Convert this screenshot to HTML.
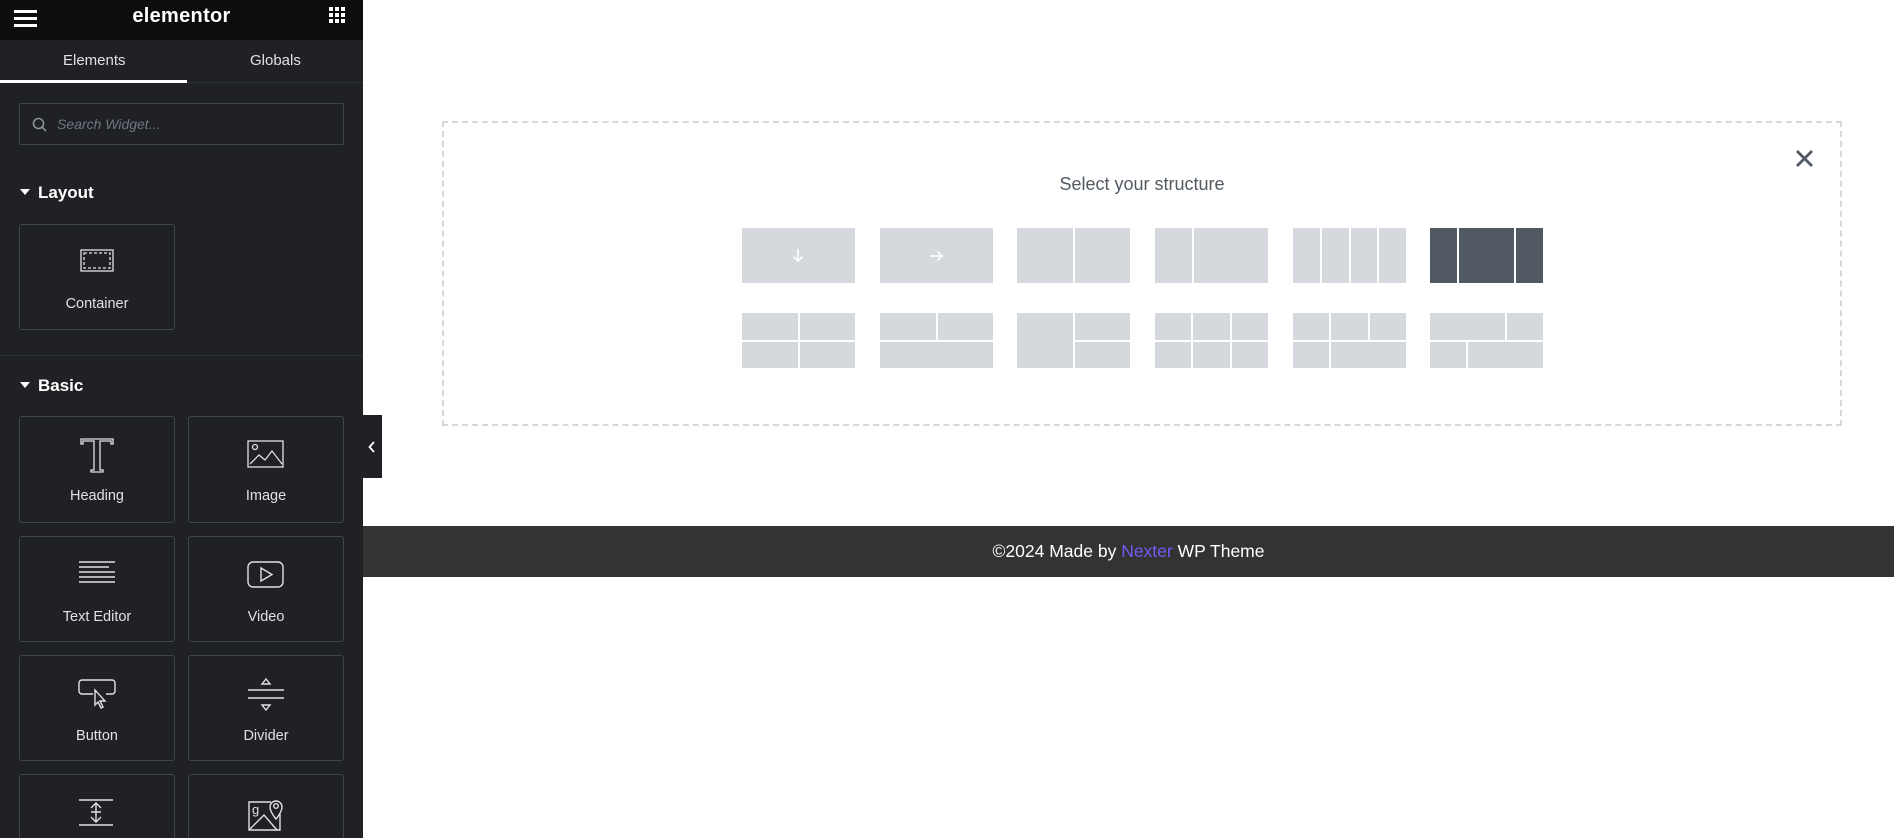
<!DOCTYPE html>
<html><head><meta charset="utf-8"><style>
*{margin:0;padding:0;box-sizing:border-box}
body{width:1894px;height:838px;overflow:hidden;background:#fff;font-family:"Liberation Sans",Arial,sans-serif;position:relative}
#sb{position:absolute;left:0;top:0;width:363px;height:838px;background:#1f2124;color:#e0e1e3;overflow:hidden}
#hd{height:40px;background:#0c0d0e;position:relative}
#hd .logo{position:absolute;left:0;right:0;top:5px;text-align:center;font-weight:bold;font-size:20px;color:#fff;letter-spacing:0.3px}
.tabs{height:43px;position:relative;border-bottom:1px solid #2d3035}
.tab{position:absolute;top:12px;font-size:15px;color:#e0e1e3}
.ul{position:absolute;left:0;top:40px;width:187px;height:3px;background:#fff}
.search{position:absolute;left:19px;top:103px;width:325px;height:42px;border:1px solid #3f444b;border-radius:2px}
.search span{position:absolute;left:37px;top:12px;font-size:14px;font-style:italic;color:#6d7882}
.sec{position:absolute;left:20px;font-weight:bold;font-size:17px;color:#fff}
.sec i{display:inline-block;width:0;height:0;border-left:5px solid transparent;border-right:5px solid transparent;border-top:6px solid #fff;margin-right:8px;vertical-align:3px}
.card{position:absolute;width:156px;border:1px solid #3f444b;border-radius:3px;text-align:center;font-size:14.5px;color:#e0e1e3}
.card svg{position:absolute;left:50%;transform:translateX(-50%)}
.card span{position:absolute;left:0;right:0}
.box{position:absolute;left:442px;top:121px;width:1400px;height:305px;border:2px dashed #d5d8dc}
.title{position:absolute;left:442px;width:1400px;top:174px;text-align:center;font-size:18px;color:#515962}
.c{position:absolute;width:113px;height:55px;display:flex;gap:2px}
.c>div{background:#d5d8dc;flex:1}
.g{position:absolute;width:113px;height:55px;display:grid;gap:2px}
.g>div{background:#d5d8dc}
#foot{position:absolute;left:363px;right:0;top:526px;height:51px;background:#333;color:#fff;text-align:center;font-size:17.5px;line-height:51px}
</style></head><body>
<div id="sb">
 <div id="hd">
  <svg style="position:absolute;left:14px;top:10px" width="23" height="18"><rect y="0" width="23" height="3" fill="#fff"/><rect y="7" width="23" height="3" fill="#fff"/><rect y="14" width="23" height="3" fill="#fff"/></svg>
  <div class="logo">elementor</div>
  <svg style="position:absolute;left:329px;top:7px" width="18" height="17" fill="#fff"><rect x="0" y="0" width="4" height="4"/><rect x="6" y="0" width="4" height="4"/><rect x="12" y="0" width="4" height="4"/><rect x="0" y="6" width="4" height="4"/><rect x="6" y="6" width="4" height="4"/><rect x="12" y="6" width="4" height="4"/><rect x="0" y="12" width="4" height="4"/><rect x="6" y="12" width="4" height="4"/><rect x="12" y="12" width="4" height="4"/></svg>
 </div>
 <div class="tabs"><div class="tab" style="left:63px">Elements</div><div class="tab" style="left:250px">Globals</div><div class="ul"></div></div>
 <div class="search"><svg style="position:absolute;left:12px;top:13px" width="15" height="15" fill="none" stroke="#8a9199" stroke-width="1.6"><circle cx="6.5" cy="6.5" r="5"/><path d="M10 10l4 4"/></svg><span>Search Widget...</span></div>
 <div class="sec" style="top:183px"><i></i>Layout</div>
 <div class="card" style="left:19px;top:224px;height:106px"><svg style="top:24px" width="34" height="24" fill="none" stroke="#e0e1e3" stroke-width="1.3"><rect x="1" y="1" width="32" height="21"/><rect x="4" y="4" width="26" height="15" stroke-dasharray="3 2"/></svg><span style="top:71px">Container</span></div>
 <div style="position:absolute;left:0;top:355px;width:363px;height:1px;background:#2d3035"></div>
 <div class="sec" style="top:376px"><i></i>Basic</div>

 <div class="card" style="left:19px;top:416px;height:107px"><svg style="top:20px" width="36" height="36" fill="none" stroke="#e0e1e3" stroke-width="1.3"><path d="M2 2h32v5h-2v-3h-11v29h3v2h-12v-2h3v-29h-11v3h-2z"/></svg><span style="top:71px">Heading</span></div>
 <div class="card" style="left:188px;top:416px;height:107px"><svg style="top:23px" width="38" height="28" fill="none" stroke="#e0e1e3" stroke-width="1.3"><rect x="1" y="1" width="35" height="26"/><circle cx="8" cy="7" r="2.5"/><path d="M3 24l9-9 6 5 7-9 10 13"/></svg><span style="top:71px">Image</span></div>

 <div class="card" style="left:19px;top:536px;height:106px"><svg style="top:23px" width="38" height="26" stroke="#e0e1e3" stroke-width="1.5"><path d="M1 2h36M1 7h30M1 12h36M1 17h36M1 22h36"/></svg><span style="top:72px">Text Editor</span></div>
 <div class="card" style="left:188px;top:536px;height:106px"><svg style="top:24px" width="38" height="28" fill="none" stroke="#e0e1e3" stroke-width="1.4"><rect x="1" y="1" width="35" height="25" rx="5"/><path d="M14 7v13l11-6.5z"/></svg><span style="top:72px">Video</span></div>

 <div class="card" style="left:19px;top:655px;height:106px"><svg style="top:23px" width="38" height="32" fill="none" stroke="#e0e1e3" stroke-width="1.4"><path d="M15 15H4a3 3 0 0 1-3-3V4a3 3 0 0 1 3-3h30a3 3 0 0 1 3 3v8a3 3 0 0 1-3 3h-6"/><path d="M17 11v15l3-3 3 6 2-1-3-6h5z"/></svg><span style="top:72px">Button</span></div>
 <div class="card" style="left:188px;top:655px;height:106px"><svg style="top:21px" width="38" height="36" fill="none" stroke="#e0e1e3" stroke-width="1.4"><path d="M15 7l4-5 4 5z M1 13h36M1 21h36M15 28h8l-4 5z"/></svg><span style="top:72px">Divider</span></div>

 <div class="card" style="left:19px;top:774px;height:100px"><svg style="top:24px" width="38" height="28" fill="none" stroke="#e0e1e3" stroke-width="1.4"><path d="M1 1h34M1 26h34M18 4v19M13 9l5-5 5 5M13 18l5 5 5-5M13 13h10"/></svg></div>
 <div class="card" style="left:188px;top:774px;height:100px"><svg style="top:19px" width="38" height="38" fill="none" stroke="#e0e1e3" stroke-width="1.4"><path d="M24 8H2v28h31V20"/><path d="M3 35l14-14 13 15"/><path d="M29 25s-6-7-6-12a6 6 0 0 1 12 0c0 5-6 12-6 12z"/><circle cx="29" cy="12" r="2.3"/><text x="5" y="20" font-size="13" fill="#e0e1e3" stroke="none" font-family="Liberation Sans">g</text></svg></div>
</div>
<div style="position:absolute;left:363px;top:415px;width:19px;height:63px;background:#1f2124"><svg style="position:absolute;left:5px;top:26px" width="8" height="12" fill="none" stroke="#fff" stroke-width="1.8"><path d="M6 1L1.5 6 6 11"/></svg></div>

<div class="box"></div>
<svg style="position:absolute;left:1795px;top:149px" width="19" height="19" stroke="#515962" stroke-width="2.8"><path d="M2 2l15 15M17 2L2 17"/></svg>
<div class="title">Select your structure</div>

<div class="c" style="left:742px;top:228px"><div style="position:relative"><svg style="position:absolute;left:50px;top:20px" width="12" height="15" fill="none" stroke="#fff" stroke-width="1.6"><path d="M6 1v12M1.5 8.5L6 13l4.5-4.5"/></svg></div></div>
<div class="c" style="left:880px;top:228px"><div style="position:relative"><svg style="position:absolute;left:49px;top:22px" width="15" height="12" fill="none" stroke="#fff" stroke-width="1.6"><path d="M1 6h12M8.5 1.5L13 6l-4.5 4.5"/></svg></div></div>
<div class="c" style="left:1017px;top:228px"><div></div><div></div></div>
<div class="c" style="left:1155px;top:228px"><div style="flex:1"></div><div style="flex:2"></div></div>
<div class="c" style="left:1293px;top:228px"><div></div><div></div><div></div><div></div></div>
<div class="c" style="left:1430px;top:228px"><div style="background:#515962;flex:1"></div><div style="background:#515962;flex:2"></div><div style="background:#515962;flex:1"></div></div>

<div class="g" style="left:742px;top:313px;grid-template-columns:1fr 1fr;grid-template-rows:1fr 1fr"><div></div><div></div><div></div><div></div></div>
<div class="g" style="left:880px;top:313px;grid-template-columns:1fr 1fr;grid-template-rows:1fr 1fr"><div></div><div></div><div style="grid-column:1/3"></div></div>
<div class="g" style="left:1017px;top:313px;grid-template-columns:1fr 1fr;grid-template-rows:1fr 1fr"><div style="grid-row:1/3"></div><div></div><div></div></div>
<div class="g" style="left:1155px;top:313px;grid-template-columns:1fr 1fr 1fr;grid-template-rows:1fr 1fr"><div></div><div></div><div></div><div></div><div></div><div></div></div>
<div class="g" style="left:1293px;top:313px;grid-template-columns:1fr 1fr 1fr;grid-template-rows:1fr 1fr"><div></div><div></div><div></div><div></div><div style="grid-column:2/4"></div></div>
<div class="g" style="left:1430px;top:313px;grid-template-columns:1fr 1fr 1fr;grid-template-rows:1fr 1fr"><div style="grid-column:1/3"></div><div></div><div></div><div style="grid-column:2/4"></div></div>

<div id="foot">©2024 Made by <span style="color:#6f5cf6">Nexter</span> WP Theme</div>
</body></html>
